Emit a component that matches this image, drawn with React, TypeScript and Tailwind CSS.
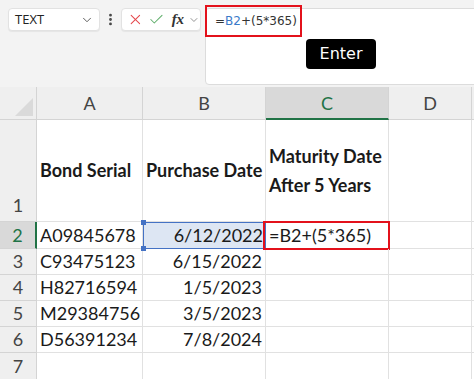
import { X, Check, ChevronDown, EllipsisVertical } from "lucide-react";

const cols = ["A", "B", "C", "D"];

const rows = [
  { id: "A09845678", date: "6/12/2022" },
  { id: "C93475123", date: "6/15/2022" },
  { id: "H82716594", date: "1/5/2023" },
  { id: "M29384756", date: "3/5/2023" },
  { id: "D56391234", date: "7/8/2024" },
];

const font = { fontFamily: 'Lato, "Open Sans", sans-serif' };

function Toolbar() {
  return (
    <div className="relative h-[87px] bg-[#f3f3f3]">
      {/* Name box */}
      <div className="absolute left-[8px] top-[8px] flex h-[23px] w-[92px] items-center justify-between rounded-[4px] border border-[#e2e2e2] bg-white pl-[6px] pr-[5px] shadow-[0_1px_1px_rgba(0,0,0,0.06)]">
        <span className="text-[13px] text-[#222]" style={{ fontFamily: '"Open Sans", sans-serif' }}>TEXT</span>
        <ChevronDown className="h-[14px] w-[14px] text-[#555]" strokeWidth={1.6} />
      </div>
      <EllipsisVertical className="absolute left-[103px] top-[12px] h-[15px] w-[15px] text-[#444]" strokeWidth={2.5} />
      {/* cancel / enter / fx */}
      <div className="absolute left-[121px] top-[8px] flex h-[23px] w-[80px] items-center gap-[4px] rounded-[4px] border border-[#e2e2e2] bg-white pl-[5px] shadow-[0_1px_1px_rgba(0,0,0,0.06)]">
        <X className="h-[17px] w-[17px] text-[#e5484d]" strokeWidth={1.5} />
        <Check className="h-[17px] w-[17px] text-[#5fae6a]" strokeWidth={1.5} />
        <span className="ml-[3px] text-[15px] font-bold italic leading-none text-[#333]" style={{ fontFamily: '"Liberation Serif", serif' }}>
          fx
        </span>
        <ChevronDown className="h-[12px] w-[12px] text-[#777]" strokeWidth={1.6} />
      </div>
      {/* Formula bar */}
      <div className="absolute left-[205px] right-[-4px] top-[8px] h-[77px] rounded-[4px] border border-[#dcdcdc] bg-white">
        <div className="absolute left-[9px] top-[3px] text-[12px] text-[#333]" style={{ fontFamily: '"DejaVu Sans", sans-serif' }}>
          =<span className="text-[#3a7ac9]">B2</span>+(5*365)
        </div>
      </div>
      <div className="absolute left-[205px] top-[5px] h-[32px] w-[97px] border-2 border-[#e3111b]" />
      <div
        className="absolute left-[306px] top-[39px] flex h-[30px] w-[70px] items-center justify-center rounded-[4px] bg-black text-[16px] text-white"
        style={{ fontFamily: '"DejaVu Sans", sans-serif' }}
      >
        Enter
      </div>
    </div>
  );
}

export default function App() {
  const gridCols = "grid-cols-[37px_106px_123px_123px_83px_2px]";
  return (
    <div className="h-[381px] w-[474px] overflow-hidden bg-white" style={font}>
      <Toolbar />
      <div className={`grid ${gridCols} text-[18px] text-[#1a1a1a]`}>
        {/* header row */}
        <div className="relative h-[33px] border-b border-r border-[#d4d4d4] bg-[#efefef]">
          <div className="absolute bottom-[3px] right-[3px] h-0 w-0 border-b-[18px] border-l-[18px] border-b-[#dadada] border-l-transparent" />
        </div>
        {cols.map((c) => (
          <div
            key={c}
            className={
              c === "C"
                ? "flex h-[33px] items-center justify-center border-b-2 border-r border-b-[#217346] border-r-[#d4d4d4] bg-[#d9d9d9] pt-[2px] text-[18px] text-[#217346]"
                : "flex h-[33px] items-center justify-center border-b border-r border-[#d4d4d4] bg-[#efefef] text-[18px] text-[#444]"
            }
          >
            {c}
          </div>
        ))}
        <div className="h-[33px] border-b border-[#d4d4d4] bg-[#efefef]" />

        {/* row 1 */}
        <div className="flex h-[102px] items-end justify-center border-b border-r border-[#d4d4d4] bg-[#efefef] pb-[2px] text-[18px] text-[#444]">
          1
        </div>
        <div className="flex h-[102px] items-center border-b border-r border-[#e1e1e1] px-[3px] font-bold">
          Bond Serial
        </div>
        <div className="flex h-[102px] items-center border-b border-r border-[#e1e1e1] px-[3px] font-bold whitespace-nowrap">
          Purchase Date
        </div>
        <div className="flex h-[102px] items-center border-b border-r border-[#e1e1e1] px-[3px] font-bold leading-[29px]">
          <span>
            Maturity Date
            <br />
            After 5 Years
          </span>
        </div>
        <div className="h-[102px] border-b border-r border-[#e1e1e1]" />
        <div className="h-[102px] border-b border-[#e1e1e1]" />

        {rows.map((r, i) => {
          const n = i + 2;
          const h = n === 2 ? "h-[27px]" : "h-[26px]";
          return (
            <div key={r.id} className="contents">
              <div
                className={
                  n === 2
                    ? `flex ${h} items-center justify-center border-b border-r-2 border-b-[#d4d4d4] border-r-[#217346] bg-[#d9d9d9] text-[18px] text-[#217346]`
                    : `flex ${h} items-center justify-center border-b border-r border-[#d4d4d4] bg-[#efefef] text-[18px] text-[#444]`
                }
              >
                {n}
              </div>
              <div className={`flex ${h} items-center border-b border-r border-[#e1e1e1] px-[3px]`}>{r.id}</div>
              <div
                className={
                  n === 2
                    ? `relative flex ${h} items-center justify-end border border-[#4472c4] bg-[#dde6f3] px-[2px]`
                    : `flex ${h} items-center justify-end border-b border-r border-[#e1e1e1] px-[3px]`
                }
              >
                {r.date}
                {n === 2 && (
                  <>
                    <div className="absolute left-[-3px] top-[-3px] h-[5px] w-[5px] bg-[#4472c4]" />
                    <div className="absolute bottom-[-3px] left-[-3px] h-[5px] w-[5px] bg-[#4472c4]" />
                  </>
                )}
              </div>
              <div className={`relative flex ${h} items-center border-b border-r border-[#e1e1e1] px-[3px]`}>
                {n === 2 && (
                  <>
                    =B2+(5*365)
                    <div className="absolute bottom-[-2px] left-[-3px] right-[-2px] top-[-1px] border-2 border-[#e3111b]" />
                  </>
                )}
              </div>
              <div className={`${h} border-b border-r border-[#e1e1e1]`} />
              <div className={`${h} border-b border-[#e1e1e1]`} />
            </div>
          );
        })}

        {/* row 7 */}
        <div className="flex h-[26px] items-center justify-center border-r border-[#d4d4d4] bg-[#efefef] text-[18px] text-[#444]">
          7
        </div>
        <div className="h-[26px] border-r border-[#e1e1e1]" />
        <div className="h-[26px] border-r border-[#e1e1e1]" />
        <div className="h-[26px] border-r border-[#e1e1e1]" />
        <div className="h-[26px] border-r border-[#e1e1e1]" />
        <div className="h-[26px]" />
      </div>
    </div>
  );
}
